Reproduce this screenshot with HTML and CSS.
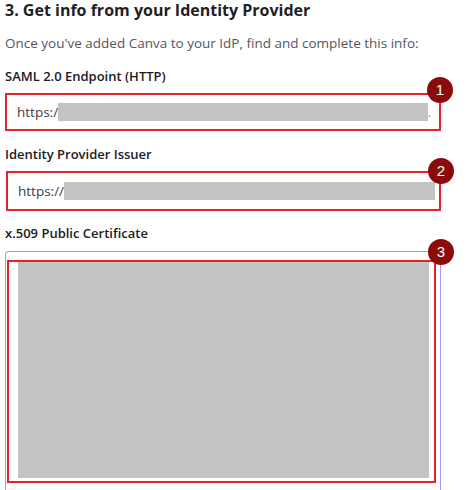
FILE: index.html
```html
<!DOCTYPE html>
<html>
<head>
<meta charset="utf-8">
<link rel="stylesheet" href="styles.css">
</head>
<body>
<div class="page">
  <h1 class="title">3. Get info from your Identity Provider</h1>
  <p class="intro">Once you've added Canva to your IdP, find and complete this info:</p>

  <div class="label l1">SAML 2.0 Endpoint (HTTP)</div>
  <div class="field f1">
    <span class="val">https:/</span><span class="redact r1"></span><span class="dot">.</span>
    <span class="badge">1</span>
  </div>

  <div class="label l2">Identity Provider Issuer</div>
  <div class="field f2">
    <span class="val">https://a</span><span class="redact r2"></span>
    <span class="badge">2</span>
  </div>

  <div class="label l3">x.509 Public Certificate</div>
  <div class="cert">
    <div class="certbox">
      <div class="certredact"></div>
    </div>
    <span class="badge b3">3</span>
  </div>
</div>
</body>
</html>
```

FILE: styles.css
```css
html, body {
  margin: 0;
  padding: 0;
  background: #ffffff;
  overflow: hidden;
}
.page {
  width: 474px;
  height: 490px;
  padding-left: 5px;
  box-sizing: border-box;
  font-family: "Open Sans", "Noto Sans", sans-serif;
  color: #1f1f24;
}
.title {
  margin: 0;
  font-size: 16px;
  line-height: 20px;
  font-weight: 700;
}
.intro {
  margin: 13px 0 0 0;
  font-size: 13.5px;
  line-height: 20px;
  color: #55565b;
}
.label {
  font-size: 13px;
  line-height: 18px;
  font-weight: 600;
  color: #1a1a1f;
}
.l1 { margin-top: 14px; }
.l2 { margin-top: 14px; }
.l3 { margin-top: 13px; }
.field {
  position: relative;
  display: flex;
  align-items: center;
  width: 436px;
  height: 38px;
  box-sizing: border-box;
  border: 2px solid #e3222c;
  padding-left: 10px;
  font-size: 13.5px;
  color: #3c3d42;
}
.f1 { margin-top: 8px; }
.f2 { margin-top: 8px; margin-left: 1px; width: 435px; height: 40px; }
.val { white-space: nowrap; }
.redact {
  display: block;
  flex-shrink: 0;
  height: 18px;
  background: #c3c3c3;
}
.r1 { width: 370px; }
.r2 { width: 371px; margin-left: -8px; }
.dot { color: #8a8a8a; font-size: 12px; }
.badge {
  position: absolute;
  top: -18px;
  right: -14px;
  width: 26px;
  height: 26px;
  border-radius: 50%;
  background: #8b0a0a;
  color: #ffffff;
  font-size: 15px;
  line-height: 26px;
  text-align: center;
  font-family: "Liberation Sans", Arial, sans-serif;
}
.f2 .badge { top: -15px; right: -15px; }
.cert {
  position: relative;
  margin-top: 9px;
  width: 436px;
  height: 250px;
  box-sizing: border-box;
  border: 1.5px solid #ad95f2;
  border-bottom: none;
  border-radius: 4px 4px 0 0;
  padding: 8px 4px 0 1px;
}
.certbox {
  width: 429px;
  height: 223px;
  box-sizing: border-box;
  border: 2px solid #e3222c;
  padding: 0 5px 3px 9px;
}
.certredact {
  width: 100%;
  height: 100%;
  background: #c3c3c3;
}
.b3 { top: -13px; right: -14px; }
```
